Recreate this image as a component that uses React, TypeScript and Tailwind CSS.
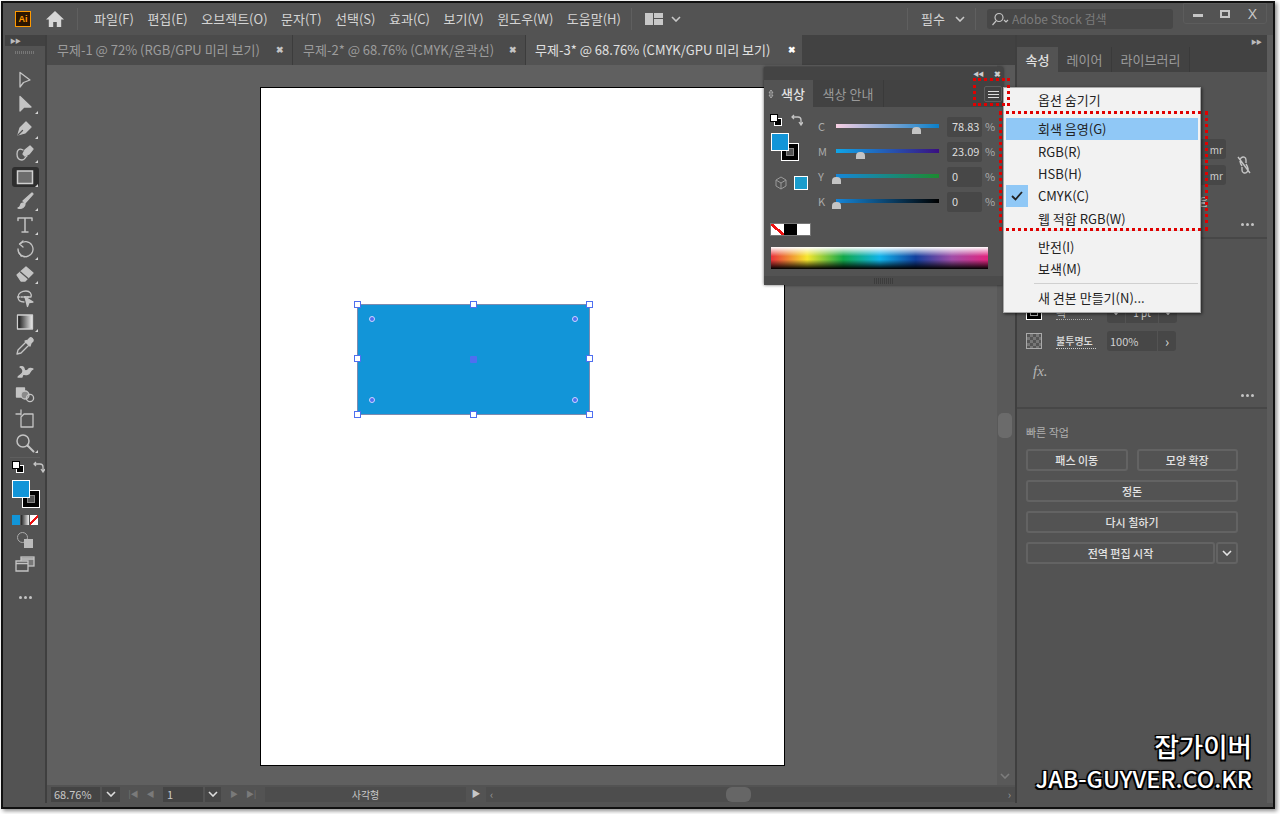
import type { ReactNode } from "react"

// ─── ICONS ────────────────────────────────────────────────────────────────────

const ic = "#c4c4c4"

function Ico({ children, size = 20 }: { children: ReactNode; size?: number }) {
  return (
    <svg width={size} height={size} viewBox="0 0 20 20" fill="none" stroke={ic} strokeWidth="1.3" strokeLinejoin="round" strokeLinecap="round" className="relative">
      {children}
    </svg>
  )
}

const TOOLS: { icon: ReactNode; corner?: boolean; active?: boolean }[] = [
  { icon: <path d="M5 2.5v14.500l3.500-4.500L15 10z" /> },
  { icon: <path d="M5 2.5v14.500l4-4h7z" fill={ic} />, corner: true },
  { icon: <><path d="M3 17l2-7 6-6 5 5-6 6z" fill={ic} /><path d="M3 17l4.5-4.5" stroke="#535353" /></>, corner: true },
  { icon: <><path d="M8 11l2-4 5-4 3 3-4 5-4 2z" fill={ic} /><path d="M8 7C4 5 2 7 2 11c0 4 2 6 5 6s3-3 5-4" /></>, corner: true },
  { icon: <rect x="2.5" y="4" width="15" height="12.5" fill="#6d6d6d" stroke="#d0d0d0" strokeWidth="1.5" strokeLinejoin="miter" />, corner: true, active: true },
  { icon: <><path d="M8 10L17 2l1 1-8 9z" fill={ic} /><path d="M3 17c2 0 2-1 3-4 1-1 3-1 4 0 0 3-3 5-7 4z" fill={ic} /></>, corner: true },
  { icon: <path d="M3 5.5V3h14v2.500M10 3v14M7 17h6" strokeWidth="1.5" />, corner: true },
  { icon: <><path d="M5 5a7.500 7.500 0 1 1-2 5" /><path d="M8 2L4.500 5 8 8" /><path d="M4 14l2 3 4 1 4-1" strokeDasharray="1.500 1.500" /></>, corner: true },
  { icon: <><path d="M2 11l9-8 7 6-8 8-4 0z" fill={ic} /><path d="M5.500 8L13 14.500" stroke="#535353" /></>, corner: true },
  { icon: <><path d="M3 9c0-4 4-6 8-6s6 3 5 6H9" /><path d="M3 9c0 4 3 5 6 5" /><path d="M3 9h11" strokeDasharray="1.500 1.500" /><path d="M10 9l8 5-4 .5-1.500 4z" fill={ic} /></> },
  { icon: <><defs><linearGradient id="tg"><stop offset="0" stopColor="#111" /><stop offset="1" stopColor="#eee" /></linearGradient></defs><rect x="2.500" y="3" width="15" height="14" fill="url(#tg)" stroke="#cfcfcf" /></>, corner: true },
  { icon: <><path d="M2 18l1-4 8-8 3 3-8 8z" /><path d="M10 5l5 5 1-3 2-2c1-2-2-4-3-3l-2 2z" fill={ic} /></> },
  { icon: <><path d="M3 17c2-3 5-2 5-6 0-2-2-4-3-4 2-1 4 0 4 2 1 3 3 2 4 1 1-2 3-2 5-1-1 0-2 1-3 3-1 3-5 3-7 2 0 1-1 2-1 3H3z" fill={ic} /></> },
  { icon: <><rect x="1.500" y="3" width="8" height="9" fill={ic} /><circle cx="10" cy="10" r="4" fill="#8a8a8a" /><circle cx="15" cy="13" r="3.600" /></> },
  { icon: <><path d="M1 5h5M6 1v5" /><path d="M6 8l3-3h9v13H6z" fill="#535353" /></> },
  { icon: <><circle cx="8" cy="8" r="6" strokeWidth="1.500" /><path d="M12.500 12.500L18.500 18.500" strokeWidth="2" /></>, corner: true },
]

function Chevron({ className = "" }: { className?: string }) {
  return (
    <svg width="10" height="6" viewBox="0 0 10 6" fill="none" stroke="currentColor" strokeWidth="1.600" className={className}>
      <path d="M1 1l4 4 4-4" />
    </svg>
  )
}

function Dots({ className }: { className: string }) {
  return (
    <div className={"flex gap-[2px] " + className}>
      <div className="w-[3px] h-[3px] rounded-full bg-[#c4c4c4]" />
      <div className="w-[3px] h-[3px] rounded-full bg-[#c4c4c4]" />
      <div className="w-[3px] h-[3px] rounded-full bg-[#c4c4c4]" />
    </div>
  )
}

function FillStroke() {
  return (
    <div className="relative w-[28px] h-[28px]">
      <div className="absolute left-[10px] top-[10px] w-[18px] h-[18px] bg-black border border-white flex items-center justify-center">
        <div className="w-[8px] h-[8px] border border-[#888] bg-[#535353]" />
      </div>
      <div className="absolute left-0 top-0 w-[18px] h-[18px] bg-[#1295d8] border border-white" />
    </div>
  )
}

function DefaultSwap() {
  return (
    <div className="flex items-center gap-[9px]">
      <div className="relative w-[12px] h-[12px]">
        <div className="absolute right-0 bottom-0 w-[8px] h-[8px] bg-black border border-white" />
        <div className="absolute left-0 top-0 w-[8px] h-[8px] bg-white border border-black" />
      </div>
      <svg width="12" height="12" viewBox="0 0 12 12" fill="none" stroke={ic} strokeWidth="1.300">
        <path d="M1 3h6c2 0 3 1 3 3v4M3 1L1 3l2 2M8 8l2 3 2-3" />
      </svg>
    </div>
  )
}

// ─── DATA ─────────────────────────────────────────────────────────────────────

const MENUS = ["파일(F)", "편집(E)", "오브젝트(O)", "문자(T)", "선택(S)", "효과(C)", "보기(V)", "윈도우(W)", "도움말(H)"]

const SLIDERS = [
  { label: "C", value: "78.83", thumb: 78, bar: "bg-[linear-gradient(to_right,#f7cfe2,#0b7fc8)]" },
  { label: "M", value: "23.09", thumb: 23, bar: "bg-[linear-gradient(to_right,#0fa5e8,#3a0f80)]" },
  { label: "Y", value: "0", thumb: 0, bar: "bg-[linear-gradient(to_right,#1686d8,#1c8a30)]" },
  { label: "K", value: "0", thumb: 0, bar: "bg-[linear-gradient(to_right,#1686d8,#000000)]" },
]

const MENU_ITEMS = ["회색 음영(G)", "RGB(R)", "HSB(H)", "CMYK(C)", "웹 적합 RGB(W)"]

function PanelButton({ children, className = "" }: { children: ReactNode; className?: string }) {
  return (
    <div className={"h-[22px] border-2 border-[#636363] rounded-[3px] flex items-center justify-center text-[11px] font-medium text-[#e4e4e4] " + className}>
      {children}
    </div>
  )
}

function Handle({ className }: { className: string }) {
  return <div className={"absolute w-[7px] h-[7px] bg-white border border-[#4f6ff0] " + className} />
}

function Widget({ className }: { className: string }) {
  return (
    <div className={"absolute w-[6px] h-[6px] rounded-full border border-[#cfd6ff] bg-[#4f6ff0] " + className} />
  )
}

// ─── APP ──────────────────────────────────────────────────────────────────────

export default function App() {
  return (
    <div className="relative w-[1280px] h-[814px] bg-white overflow-hidden font-['Noto_Sans_CJK_KR','Noto_Sans',sans-serif] text-[13px] text-[#cfcfcf]">
      <div className="w-[1274px] h-[808px] ml-px mt-px border-2 border-[#111] bg-[#535353] flex flex-col pb-[4px] shadow-[2px_2px_4px_rgba(0,0,0,0.45)]">

        {/* Title bar */}
        <div className="h-[32px] shrink-0 flex items-center pl-[12px] relative">
          <div className="w-[16px] h-[16px] bg-[#2b1500] border border-[#ff9a00] text-[#ff9a00] text-[9px] font-bold leading-none flex items-center justify-center font-['Liberation_Sans',sans-serif]">Ai</div>
          <svg width="20" height="18" viewBox="0 0 20 18" fill="#d6d6d6" className="ml-[14px]">
            <path d="M10 1L1 9.500h2.800V17h4.400v-5h3.600v5h4.400V9.500H19z" />
          </svg>
          <div className="w-px h-[22px] bg-[#5f5f5f] ml-[12px]" />
          <div className="flex ml-[16px] gap-[13.500px] text-[#d4d4d4]">
            {MENUS.map((m) => <span key={m} className="whitespace-nowrap">{m}</span>)}
          </div>
          <div className="w-px h-[22px] bg-[#5f5f5f] ml-[10px]" />
          <div className="flex gap-[1px] ml-[13px]">
            <div className="w-[8px] h-[12px] bg-[#c8c8c8]" />
            <div className="flex flex-col gap-[1px]">
              <div className="w-[9px] h-[5px] bg-[#c8c8c8]" />
              <div className="w-[9px] h-[6px] bg-[#c8c8c8]" />
            </div>
          </div>
          <Chevron className="ml-[8px] text-[#c8c8c8]" />
          <div className="w-px h-[22px] bg-[#5f5f5f] ml-[226px]" />
          <span className="ml-[13px] text-[#d4d4d4]">필수</span>
          <Chevron className="ml-[10px] text-[#c8c8c8]" />
          <div className="w-px h-[22px] bg-[#5f5f5f] ml-[10px]" />
          <div className="ml-[11px] w-[186px] h-[20px] bg-[#474747] rounded-[3px] flex items-center pl-[4px] text-[12px] text-[#7c7c7c]">
            <svg width="18" height="14" viewBox="0 0 18 14" fill="none" stroke="#c4c4c4" strokeWidth="1.200">
              <circle cx="8" cy="5.500" r="4" />
              <path d="M5 9l-3.500 4" />
              <path d="M13 8l2 2 2-2" />
            </svg>
            <span className="ml-[3px]">Adobe Stock 검색</span>
          </div>
          <div className="absolute right-[6px] top-[0px] w-[84px] h-[21px] border border-[#5c5c5c] rounded-b-[3px] flex items-center text-[#c6c6c6]">
            <div className="flex-1 flex justify-center pt-[4px]"><div className="w-[10px] h-[3px] bg-[#c6c6c6]" /></div>
            <div className="flex-1 flex justify-center"><div className="w-[10px] h-[8px] border-2 border-[#c6c6c6]" /></div>
            <div className="flex-1 text-center text-[14px] leading-none font-['Liberation_Sans',sans-serif]">X</div>
          </div>
        </div>

        {/* Workspace */}
        <div className="flex-1 min-h-0 flex">

          {/* Left toolbar */}
          <div className="w-[42px] shrink-0 pl-[2px] flex">
            <div className="w-[40px] flex flex-col items-center">
              <div className="w-full h-[11px] bg-[#424242] flex items-center pl-[5px] text-[6px] text-[#bbb] leading-none tracking-[-1px]">▶▶</div>
              <div className="w-[20px] h-[3px] mt-[5px] mb-[14px] bg-[repeating-linear-gradient(to_right,#777_0,#777_1px,transparent_1px,transparent_2px)]" />
              {TOOLS.map((t, i) => (
                <div key={i} className="relative w-[27px] h-[24.200px] flex items-center justify-center">
                  {t.active && <div className="absolute inset-x-0 top-[2px] bottom-[2px] bg-[#2e2e2e] rounded-[3px]" />}
                  <Ico>{t.icon}</Ico>
                  {t.corner && (
                    <div className="absolute right-[1px] bottom-[2px] w-0 h-0 border-l-[3px] border-l-transparent border-b-[3px] border-b-[#d4d4d4]" />
                  )}
                </div>
              ))}
              <div className="w-[30px] h-px bg-[#5e5e5e] mt-[2px] mb-[2px]" />
              <div className="self-start ml-[7px] mt-[1px]"><DefaultSwap /></div>
              <div className="self-start ml-[7px] mt-[7px]"><FillStroke /></div>
              <div className="w-[27px] h-[10px] mt-[7px] flex gap-[1px]">
                <div className="flex-1 bg-[#1295d8]" />
                <div className="flex-1 bg-[linear-gradient(to_right,#222,#eee)]" />
                <div className="flex-1 bg-[linear-gradient(135deg,#fff_40%,#e11_40%,#e11_60%,#fff_60%)]" />
              </div>
              <div className="mt-[7px] relative w-[16px] h-[16px]">
                <div className="absolute left-0 top-0 w-[11px] h-[11px] rounded-full border border-[#aaa]" />
                <div className="absolute right-0 bottom-0 w-[9px] h-[9px] bg-[#bbb]" />
              </div>
              <svg width="20" height="16" viewBox="0 0 20 16" fill="none" stroke={ic} strokeWidth="1.300" className="mt-[8px]">
                <rect x="6" y="1" width="13" height="9" fill="#777" />
                <path d="M1 5h12v10H1z" fill="#535353" />
                <path d="M1 7.500h12M6 3h13" />
              </svg>
              <Dots className="mt-[24px]" />
            </div>
          </div>

          {/* Document area */}
          <div className="w-[970px] shrink-0 flex flex-col border-l-2 border-[#3f3f3f]">
            {/* Tabs */}
            <div className="h-[30px] shrink-0 bg-[#424242] flex">
              <div className="w-[246px] bg-[#4b4b4b] border-r border-[#3c3c3c] flex items-center pl-[10px] text-[#9c9c9c]">
                <span className="whitespace-nowrap">무제-1 @ 72% (RGB/GPU 미리 보기)</span>
                <span className="ml-auto mr-[8px] text-[9px] font-bold text-[#c4c4c4]">✖</span>
              </div>
              <div className="w-[233px] bg-[#4b4b4b] border-r border-[#3c3c3c] flex items-center pl-[10px] text-[#9c9c9c]">
                <span className="whitespace-nowrap">무제-2* @ 68.76% (CMYK/윤곽선)</span>
                <span className="ml-auto mr-[8px] text-[9px] font-bold text-[#c4c4c4]">✖</span>
              </div>
              <div className="w-[276px] bg-[#535353] flex items-center pl-[9px] text-[#e0e0e0]">
                <span className="whitespace-nowrap">무제-3* @ 68.76% (CMYK/GPU 미리 보기)</span>
                <span className="ml-auto mr-[6px] text-[9px] font-bold text-white">✖</span>
              </div>
            </div>

            {/* Canvas + vertical scrollbar */}
            <div className="flex-1 min-h-0 flex">
              <div className="flex-1 bg-[#606060] pl-[213px] pt-[22px]">
                <div className="relative w-[525px] h-[679px] bg-white border border-black pl-[96px] pt-[216px]">
                  <div className="relative w-[233px] h-[111px] bg-[#1295d8] border border-[#7d8bb0]">
                    <Handle className="left-[-4px] top-[-4px]" />
                    <Handle className="left-[112px] top-[-4px]" />
                    <Handle className="right-[-4px] top-[-4px]" />
                    <Handle className="left-[-4px] top-[50px]" />
                    <Handle className="right-[-4px] top-[50px]" />
                    <Handle className="left-[-4px] bottom-[-4px]" />
                    <Handle className="left-[112px] bottom-[-4px]" />
                    <Handle className="right-[-4px] bottom-[-4px]" />
                    <Widget className="left-[11px] top-[11px]" />
                    <Widget className="right-[11px] top-[11px]" />
                    <Widget className="left-[11px] bottom-[11px]" />
                    <Widget className="right-[11px] bottom-[11px]" />
                    <div className="absolute left-[112px] top-[51px] w-[7px] h-[7px] bg-[#4f6ff0] rounded-[1px]" />
                  </div>
                </div>
              </div>
              <div className="w-[18px] shrink-0 bg-[#595959] flex flex-col pl-px pt-[348px]">
                <div className="w-[14px] h-[25px] bg-[#6b6b6b] rounded-[5px]" />
                <Chevron className="mt-[335px] ml-[2px] text-[#7d7d7d]" />
              </div>
            </div>

            {/* Status bar */}
            <div className="h-[18px] shrink-0 flex items-center pl-[4px] text-[11px] text-[#c8c8c8]">
              <div className="w-[49px] h-[15px] bg-[#444] flex items-center pl-[3px] text-[11px]">68.76%</div>
              <div className="w-[18px] h-[15px] ml-[2px] bg-[#474747] flex items-center justify-center"><Chevron className="text-[#ddd]" /></div>
              <div className="w-[43px] flex items-center justify-center gap-[8px] text-[8px] text-[#7a7a7a]"><span>|◀</span><span>◀</span></div>
              <div className="w-[40px] h-[15px] bg-[#444] flex items-center pl-[4px] text-[11px]">1</div>
              <div className="w-[16px] h-[15px] ml-[2px] bg-[#474747] flex items-center justify-center"><Chevron className="text-[#ddd]" /></div>
              <div className="w-[44px] flex items-center justify-center gap-[8px] text-[8px] text-[#7a7a7a]"><span>▶</span><span>▶|</span></div>
              <div className="w-[201px] h-[15px] bg-[#4d4d4d] flex items-center justify-center text-[10px]">사각형</div>
              <div className="w-[20px] text-center text-[9px] text-[#c8c8c8]">▶</div>
              <div className="flex-1 h-[15px] bg-[#4d4d4d] flex items-center pl-[4px] pr-[4px] text-[#999] text-[11px] leading-none">
                <span>‹</span>
                <div className="w-[25px] h-[15px] bg-[#666] rounded-[6px] ml-[233px]" />
                <span className="ml-auto">›</span>
              </div>
            </div>
          </div>

          {/* Right panel */}
          <div className="flex-1 min-w-0 flex">
            <div className="w-[252px] shrink-0 flex flex-col border-l-2 border-[#3f3f3f]">
              <div className="h-[12px] shrink-0 bg-[#424242] flex items-center justify-end pr-[6px] text-[6px] text-[#bbb] tracking-[-1px]">▶▶</div>
              <div className="h-[25px] shrink-0 bg-[#424242] flex text-[#9a9a9a]">
                <div className="w-[41px] bg-[#535353] flex items-center justify-center text-[#e0e0e0] font-medium">속성</div>
                <div className="w-[54px] flex items-center justify-center border-r border-[#3a3a3a]">레이어</div>
                <div className="w-[78px] flex items-center justify-center border-r border-[#3a3a3a]">라이브러리</div>
              </div>

              {/* Transform section (mostly hidden by the menu) */}
              <div className="h-[167px] shrink-0 border-b-2 border-[#474747] pl-[184px] pt-[67px] relative">
                <div className="w-[25px] h-[20px] bg-[#474747] rounded-r-[3px] flex items-center justify-end pr-[3px] text-[10px]">mr</div>
                <div className="w-[25px] h-[20px] mt-[6px] bg-[#474747] rounded-r-[3px] flex items-center justify-end pr-[3px] text-[10px]">mr</div>
                <span className="absolute left-[182px] top-[124px] text-[10px] leading-[12px] text-[#bbb]">음</span>
                <svg width="18" height="20" viewBox="0 0 18 20" fill="none" stroke="#c4c4c4" strokeWidth="1.400" className="absolute left-[218px] top-[83px]">
                  <path d="M6 3c2-2 5-1 5 2l0 3M6 3C4 5 5 8 7 11M12 17c-2 2-5 1-5-2v-3M12 17c2-2 1-5-1-8M3 2l12 16" />
                </svg>
                <Dots className="absolute right-[13px] bottom-[11px]" />
              </div>

              {/* Appearance section */}
              <div className="h-[170px] shrink-0 border-b-2 border-[#474747] pl-[9px] pt-[62px] relative">
                <div className="flex items-center h-[22px]">
                  <div className="w-[16px] h-[16px] bg-black border border-white flex items-center justify-center">
                    <div className="w-[8px] h-[8px] border border-[#aaa]" />
                  </div>
                  <span className="ml-[14px] w-[36px] text-[11px] border-b border-dotted border-[#aaa] leading-[14px]">획</span>
                  <div className="ml-[15px] w-[18px] h-[22px] bg-[#474747] rounded-l-[3px] flex items-center justify-center"><Chevron className="text-[#ddd]" /></div>
                  <div className="ml-px w-[32px] h-[22px] bg-[#474747] flex items-center justify-center text-[10px]">1 pt</div>
                  <div className="ml-px w-[18px] h-[22px] bg-[#474747] rounded-r-[3px] flex items-center justify-center"><Chevron className="text-[#ddd]" /></div>
                </div>
                <div className="flex items-center h-[22px] mt-[7px]">
                  <div className="w-[16px] h-[16px] border border-[#aaa] bg-[repeating-conic-gradient(#777_0_25%,#555_0_50%)] bg-[length:6px_6px]" />
                  <span className="ml-[14px] w-[40px] text-[10px] font-medium text-[#e0e0e0] border-b border-dotted border-[#ccc] leading-[14px] whitespace-nowrap">불투명도</span>
                  <div className="ml-[11px] w-[50px] h-[20px] bg-[#474747] rounded-l-[3px] flex items-center pl-[3px] text-[11px]">100%</div>
                  <div className="ml-px w-[18px] h-[20px] bg-[#474747] rounded-r-[3px] flex items-center justify-center text-[14px] leading-none text-[#ddd]">›</div>
                </div>
                <div className="mt-[8px] ml-[7px] italic text-[15px] leading-[22px] text-[#b5b5b5] font-['Liberation_Serif',serif]">fx.</div>
                <Dots className="absolute right-[13px] bottom-[10px]" />
              </div>

              {/* Quick actions */}
              <div className="pl-[9px] pr-[29px] pt-[15px]">
                <div className="text-[11px] leading-[16px] text-[#b0b0b0]">빠른 작업</div>
                <div className="flex flex-col gap-[9px] mt-[9px]">
                  <div className="flex gap-[9px]">
                    <PanelButton className="flex-1">패스 이동</PanelButton>
                    <PanelButton className="flex-1">모양 확장</PanelButton>
                  </div>
                  <PanelButton>정돈</PanelButton>
                  <PanelButton>다시 칠하기</PanelButton>
                  <div className="flex gap-[1px]">
                    <PanelButton className="flex-1">전역 편집 시작</PanelButton>
                    <PanelButton className="w-[22px] text-[#aaa]"><Chevron /></PanelButton>
                  </div>
                </div>
              </div>
            </div>
            <div className="flex-1 bg-[#5c5c5c]" />
          </div>
        </div>
      </div>

      {/* Floating colour panel */}
      <div className="absolute left-[764px] top-[67px] w-[239px] h-[218px] bg-[#535353] shadow-[0_0_3px_rgba(0,0,0,0.6)] flex flex-col">
        <div className="h-[13px] shrink-0 bg-[#444] flex items-center justify-end gap-[11px] pr-[2px] text-[6px] text-[#ccc] leading-none">
          <span className="tracking-[-1px]">◀◀</span>
          <span className="text-[8px] font-bold">✖</span>
        </div>
        <div className="h-[27px] shrink-0 bg-[#424242] flex">
          <div className="w-[49px] bg-[#535353] flex items-center pl-[4px] gap-[7px] text-[#e4e4e4] font-medium">
            <svg width="6" height="10" viewBox="0 0 6 10" fill="none" stroke="#aaa" strokeWidth="1" className="shrink-0">
              <path d="M1 4l2-3 2 3zM1 6l2 3 2-3z" />
            </svg>
            <span className="whitespace-nowrap">색상</span>
          </div>
          <div className="w-[71px] flex items-center justify-center text-[#9a9a9a] border-r border-[#3a3a3a]">색상 안내</div>
          <div className="ml-auto mr-[1px] mt-[6px] w-[18px] h-[16px] border border-[#5e5e5e] rounded-[2px] flex flex-col items-center justify-center gap-[2px]">
            <div className="w-[11px] h-px bg-[#ddd]" />
            <div className="w-[11px] h-px bg-[#ddd]" />
            <div className="w-[11px] h-px bg-[#ddd]" />
          </div>
        </div>
        <div className="flex-1 flex pl-[6px]">
          <div className="w-[48px] pt-[7px]">
            <DefaultSwap />
            <div className="mt-[7px] ml-px"><FillStroke /></div>
            <div className="mt-[15px] ml-[4px] flex items-center gap-[6px]">
              <svg width="14" height="14" viewBox="0 0 14 14" fill="none" stroke="#9a9a9a" strokeWidth="1">
                <path d="M7 1l5 3v6l-5 3-5-3V4zM2 4l5 3 5-3M7 7v6" />
              </svg>
              <div className="w-[14px] h-[14px] bg-[#1a9ccc] border border-white" />
            </div>
          </div>
          <div className="pt-[7px]">
            {SLIDERS.map((s) => (
              <div key={s.label} className="flex items-center h-[25px]">
                <span className="w-[18px] text-[11px] text-[#aaa]">{s.label}</span>
                <div className="relative w-[103px] h-[4px] mr-[8px] -mt-[1px]">
                  <div className={"w-full h-full " + s.bar} />
                  <div
                    className="absolute top-[3px] w-[9px] h-[7px] bg-[#c4c4c4] rounded-t-[4px] -ml-[4px]"
                    style={{ left: s.thumb + "%" }}
                  />
                </div>
                <div className="w-[35px] h-[20px] bg-[#474747] rounded-[2px] flex items-center pl-[5px] text-[11px] text-[#ddd]">{s.value}</div>
                <span className="ml-[3px] text-[11px] text-[#aaa]">%</span>
              </div>
            ))}
          </div>
        </div>
        <div className="absolute left-[6px] top-[156px] flex h-[13px] border border-[#777]">
          <div className="w-[13px] bg-[linear-gradient(to_bottom_left,#fff_42%,#e11_42%,#e11_58%,#fff_58%)]" />
          <div className="w-[13px] bg-black" />
          <div className="w-[13px] bg-white" />
        </div>
        <div className="absolute left-[7px] top-[180px] w-[217px] h-[22px] bg-[linear-gradient(to_bottom,#ffffff,transparent_42%,transparent_58%,#000000),linear-gradient(to_right,#e8323a,#f6e62e,#12a84a,#10b4ea,#12409e,#a04ea8,#e2247e)]" />
        <div className="h-[9px] shrink-0 bg-[#4b4b4b] flex items-center justify-center">
          <div className="w-[20px] h-[6px] bg-[repeating-linear-gradient(to_right,#3c3c3c_0,#3c3c3c_1px,transparent_1px,transparent_2px)]" />
        </div>
      </div>

      {/* Panel options menu */}
      <div className="absolute left-[1003px] top-[87px] w-[198px] h-[226px] bg-[#f2f2f2] border border-[#a8a8a8] shadow-[1px_1px_3px_rgba(0,0,0,0.6)] text-[#222] text-[13px]">
        <div className="h-[24px] flex items-center pl-[34px]">옵션 숨기기</div>
        <div className="h-[6px]" />
        {MENU_ITEMS.map((m, i) => (
          <div
            key={m}
            className={
              "relative h-[22.300px] mx-[2px] flex items-center pl-[32px] " +
              (i === 0 ? "bg-[#90c8f6]" : "")
            }
          >
            {i === 3 && (
              <div className="absolute left-0 top-0 w-[22px] h-[22px] bg-[#90c8f6] flex items-center justify-center">
                <svg width="12" height="10" viewBox="0 0 12 10" fill="none" stroke="#222" strokeWidth="1.800"><path d="M1 5l3.500 3.500L11 1" /></svg>
              </div>
            )}
            {m}
          </div>
        ))}
        <div className="h-px bg-[#dcdcdc] ml-[30px] mr-[2px] mt-[1px] mb-[4px]" />
        <div className="h-[22px] flex items-center pl-[34px]">반전(I)</div>
        <div className="h-[22px] flex items-center pl-[34px]">보색(M)</div>
        <div className="h-px bg-[#d0d0d0] ml-[30px] mr-[2px] mt-[4px] mb-[2px]" />
        <div className="h-[22px] flex items-center pl-[34px]">새 견본 만들기(N)...</div>
      </div>

      {/* Red dotted annotations */}
      <div className="absolute left-[973px] top-[78px] w-[37px] h-[28px] border-[3px] border-dotted border-[#e00000]" />
      <div className="absolute left-[999px] top-[111px] w-[209px] h-[120px] border-[3px] border-dotted border-[#e00000]" />

      {/* Watermark */}
      <div className="absolute right-[28px] top-[729px] text-right font-['Noto_Sans_CJK_KR',sans-serif] font-medium text-white [text-shadow:-1.500px_-1.500px_0_#000,1.500px_-1.500px_0_#000,-1.500px_1.500px_0_#000,1.500px_1.500px_0_#000,0_0_3px_#000]">
        <div className="text-[26.500px] leading-[34px]">잡가이버</div>
        <div className="text-[23.300px] leading-[30px] whitespace-nowrap">JAB-GUYVER.CO.KR</div>
      </div>
    </div>
  )
}
